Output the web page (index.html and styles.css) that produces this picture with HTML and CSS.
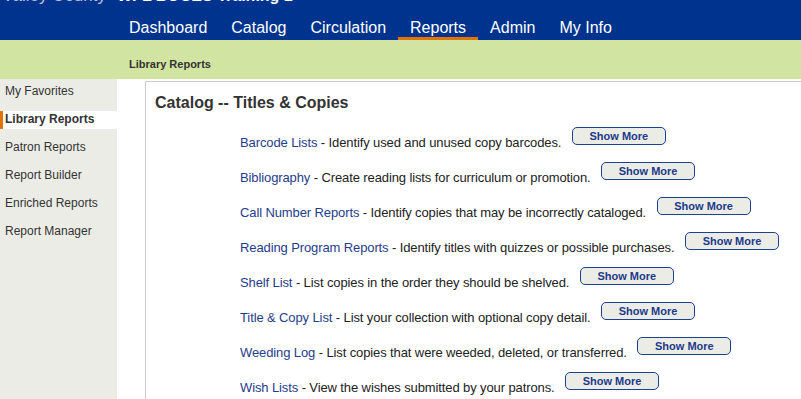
FILE: index.html
```html
<!DOCTYPE html>
<html lang="en">
<head>
    <meta charset="UTF-8">
    <meta name="viewport" content="width=device-width, initial-scale=1.0">
    <title>Library Reports</title>
    <link rel="stylesheet" href="styles.css">
</head>
<body>
    <header class="topbar">
        <div class="brand-row">
            <span class="district">Genesee Valley County</span>
            <span class="site-name">WFL BOCES Training 1</span>
        </div>
        <nav class="main-nav">
            <a href="#">Dashboard</a>
            <a href="#">Catalog</a>
            <a href="#">Circulation</a>
            <a href="#" class="active">Reports</a>
            <a href="#">Admin</a>
            <a href="#">My Info</a>
        </nav>
    </header>

    <div class="subbar">Library Reports</div>

    <div class="layout">
        <aside class="sidebar">
            <a href="#">My Favorites</a>
            <a href="#" class="active">Library Reports</a>
            <a href="#">Patron Reports</a>
            <a href="#">Report Builder</a>
            <a href="#">Enriched Reports</a>
            <a href="#">Report Manager</a>
        </aside>

        <main class="content">
            <section class="panel">
                <h2>Catalog -- Titles &amp; Copies</h2>
                <div class="report-row"><a href="#">Barcode Lists</a> - Identify used and unused copy barcodes. <button class="more-btn">Show More</button></div>
                <div class="report-row"><a href="#">Bibliography</a> - Create reading lists for curriculum or promotion. <button class="more-btn">Show More</button></div>
                <div class="report-row"><a href="#">Call Number Reports</a> - Identify copies that may be incorrectly cataloged. <button class="more-btn">Show More</button></div>
                <div class="report-row"><a href="#">Reading Program Reports</a> - Identify titles with quizzes or possible purchases. <button class="more-btn">Show More</button></div>
                <div class="report-row"><a href="#">Shelf List</a> - List copies in the order they should be shelved. <button class="more-btn">Show More</button></div>
                <div class="report-row"><a href="#">Title &amp; Copy List</a> - List your collection with optional copy detail. <button class="more-btn">Show More</button></div>
                <div class="report-row"><a href="#">Weeding Log</a> - List copies that were weeded, deleted, or transferred. <button class="more-btn">Show More</button></div>
                <div class="report-row"><a href="#">Wish Lists</a> - View the wishes submitted by your patrons. <button class="more-btn">Show More</button></div>
            </section>
        </main>
    </div>
</body>
</html>
```

FILE: styles.css
```css
body {
    margin: 0;
    font-family: "Liberation Sans", Arial, sans-serif;
    background-color: white;
    overflow: hidden;
}
a {
    text-decoration: none;
}
.topbar {
    background-color: #00338d;
    height: 40px;
    overflow: hidden;
}
.brand-row {
    display: flex;
    margin-top: -12px;
    height: 16px;
    line-height: 16px;
}
.district {
    width: 117px;
    padding-right: 11px;
    box-sizing: border-box;
    text-align: right;
    white-space: nowrap;
    overflow: hidden;
    direction: rtl;
    color: #b8bfd6;
    font-size: 17px;
}
.site-name {
    color: white;
    font-weight: bold;
    font-size: 16px;
}
.main-nav {
    display: flex;
    margin-left: 117px;
}
.main-nav a {
    color: white;
    font-size: 16px;
    line-height: 18px;
    padding: 15px 12px 0;
    border-bottom: 3px solid transparent;
}
.main-nav a.active {
    border-bottom-color: #e07408;
}
.subbar {
    background-color: #d2e4a1;
    height: 39px;
    box-sizing: border-box;
    padding: 0 0 8px 129px;
    display: flex;
    align-items: flex-end;
    font-size: 11px;
    line-height: 13px;
    font-weight: bold;
    color: #333;
}
.layout {
    display: flex;
    height: 320px;
}
.sidebar {
    width: 117px;
    flex-shrink: 0;
    background-color: #ecece7;
    padding-top: 4px;
    display: flex;
    flex-direction: column;
    gap: 10px;
}
.sidebar a {
    display: block;
    color: #333;
    font-size: 12px;
    line-height: 16px;
    padding: 0 0 2px 5px;
}
.sidebar a.active {
    background-color: white;
    font-weight: bold;
    border-left: 3px solid #e07408;
    padding-left: 2px;
}
.content {
    flex: 1;
    padding: 2px 0 0 28px;
}
.panel {
    border: 1px solid #cacaca;
    border-right: none;
    border-bottom: none;
    height: 100%;
    padding: 11px 0 0 9px;
    box-sizing: border-box;
}
.panel h2 {
    margin: 0 0 12px;
    font-size: 16px;
    line-height: 20px;
    color: #333;
}
.report-row {
    height: 35px;
    line-height: 35px;
    padding-left: 85px;
    font-size: 13px;
    letter-spacing: -0.11px;
    color: #222;
    white-space: nowrap;
}
.report-row a {
    color: #1f3d8c;
}
.more-btn {
    width: 94px;
    height: 18px;
    box-sizing: border-box;
    margin-left: 7px;
    padding: 0;
    border: 1px solid #1f3f8f;
    border-radius: 5px;
    background-color: #ecece6;
    color: #1c3a8a;
    font-family: "Liberation Sans", Arial, sans-serif;
    font-size: 11px;
    font-weight: bold;
    letter-spacing: 0;
    line-height: 16px;
    vertical-align: 7px;
    cursor: pointer;
}
```
